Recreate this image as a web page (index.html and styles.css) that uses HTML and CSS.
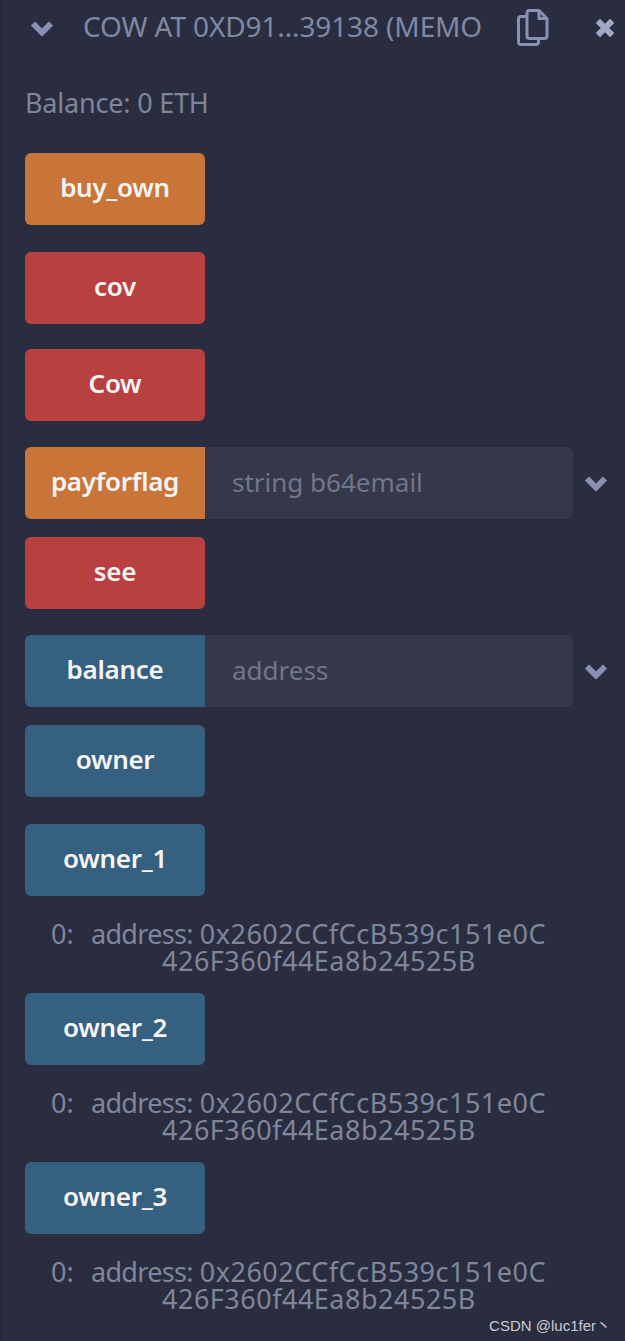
FILE: index.html
```html
<!DOCTYPE html>
<html lang="en">
<head>
<meta charset="utf-8">
<title>Cow contract</title>
<link rel="stylesheet" href="styles.css">
</head>
<body>
<main class="panel">
  <header class="head">
    <svg class="chev head-chev" viewBox="0 0 24 16"><path d="M3 3.500 12 12.500 21 3.500"/></svg>
    <div class="title">COW AT 0XD91...39138 (MEMO</div>
    <svg class="copy" viewBox="0 0 32 37"><path d="M10 7.500H4A2.500 2.500 0 0 0 1.500 10V33A2.500 2.500 0 0 0 4 35.500H19A2.500 2.500 0 0 0 21.500 33V29.500"/><path d="M12.500 1.500H22L30 9.500V27A2.500 2.500 0 0 1 27.500 29.500H12.500A2.500 2.500 0 0 1 10 27V4A2.500 2.500 0 0 1 12.500 1.500Z"/><path d="M22 2V9.500H29.500"/></svg>
    <svg class="close" viewBox="0 0 20 20"><path d="M3.500 3.500 16.500 16.500M16.500 3.500 3.500 16.500"/></svg>
  </header>
  <div class="balance">Balance: 0 ETH</div>

  <button class="btn orange">buy_own</button>
  <button class="btn red gap-a">cov</button>
  <button class="btn red gap-b">Cow</button>

  <div class="row gap-c">
    <button class="btn orange joined">payforflag</button>
    <div class="field">string b64email</div>
    <svg class="chev row-chev" viewBox="0 0 24 16"><path d="M3 3.500 12 12.500 21 3.500"/></svg>
  </div>
  <button class="btn red gap-d">see</button>
  <div class="row gap-c">
    <button class="btn blue joined">balance</button>
    <div class="field">address</div>
    <svg class="chev row-chev" viewBox="0 0 24 16"><path d="M3 3.500 12 12.500 21 3.500"/></svg>
  </div>
  <button class="btn blue gap-d">owner</button>
  <button class="btn blue gap-a">owner_1</button>
  <div class="result"><span class="idx">0:</span><span class="val"><span class="type">address:</span> <span class="hex">0x2602CCfCcB539c151e0C</span><span class="hex cont">426F360f44Ea8b24525B</span></span></div>
  <button class="btn blue gap-d">owner_2</button>
  <div class="result"><span class="idx">0:</span><span class="val"><span class="type">address:</span> <span class="hex">0x2602CCfCcB539c151e0C</span><span class="hex cont">426F360f44Ea8b24525B</span></span></div>
  <button class="btn blue gap-d">owner_3</button>
  <div class="result"><span class="idx">0:</span><span class="val"><span class="type">address:</span> <span class="hex">0x2602CCfCcB539c151e0C</span><span class="hex cont">426F360f44Ea8b24525B</span></span></div>
</main>
<div class="mark">CSDN @luc1fer丶</div>
</body>
</html>
```
FILE: styles.css
```css
html, body {
  margin: 0;
  height: 100%;
  overflow: hidden;
}
body {
  background: #2a2d40;
  font-family: "Noto Sans", sans-serif;
  position: relative;
  width: 625px;
  height: 1341px;
}
.panel {
  box-sizing: border-box;
  height: 1341px;
  padding-left: 23px;
  border-left: 2px solid #24273a;
}
.head {
  display: flex;
  align-items: center;
  height: 55px;
  position: relative;
}
.chev {
  fill: none;
  stroke: #8891b3;
  stroke-width: 6;
}
.head-chev {
  width: 24px;
  height: 16px;
  margin-left: 5px;
}
.title {
  margin-left: 29px;
  flex: none;
  font-size: 28px;
  line-height: 53px;
  height: 55px;
  letter-spacing: -0.12px;
  color: #7f88a5;
  white-space: nowrap;
}
.copy {
  position: absolute;
  left: 492px;
  top: 9px;
  width: 32px;
  height: 37px;
  fill: none;
  stroke: #8891b3;
  stroke-width: 3;
}
.close {
  position: absolute;
  left: 569px;
  top: 17px;
  width: 22px;
  height: 22px;
  fill: none;
  stroke: #a1a9c6;
  stroke-width: 5.5;
}
.balance {
  height: 98px;
  line-height: 96px;
  font-size: 27px;
  letter-spacing: -0.2px;
  color: #7f869c;
}
.btn {
  display: block;
  box-sizing: border-box;
  width: 180px;
  height: 72px;
  padding: 0 0 4px;
  border: 0;
  border-radius: 6px;
  color: #f4f4f4;
  font: 600 26px "Noto Sans", sans-serif;
  letter-spacing: -0.3px;
  text-align: center;
  flex: none;
}
.orange { background: #c97539; }
.red { background: #b84040; }
.blue { background: #35607f; }
.gap-a { margin-top: 27px; }
.gap-b { margin-top: 25px; }
.gap-c { margin-top: 26px; }
.gap-d { margin-top: 18px; }
.row {
  display: flex;
  align-items: center;
}
.joined {
  border-radius: 6px 0 0 6px;
}
.field {
  box-sizing: border-box;
  width: 368px;
  height: 72px;
  line-height: 70px;
  padding-left: 27px;
  background: #35384b;
  border-radius: 0 6px 6px 0;
  font-size: 26px;
  color: #71768a;
}
.row-chev {
  width: 24px;
  height: 16px;
  margin-left: 11px;
}
.result {
  display: flex;
  margin-top: 24px;
  padding-bottom: 1px;
  margin-left: 26px;
  font-size: 27px;
  line-height: 27px;
  color: #7f869c;
}
.idx {
  width: 40px;
  flex: none;
}
.val {
  white-space: nowrap;
}
.type {
  letter-spacing: -0.7px;
}
.hex {
  letter-spacing: 0.5px;
}
.cont {
  display: block;
  margin-left: 71px;
}
.mark {
  position: absolute;
  right: 14px;
  bottom: 6px;
  font: 15px "Liberation Sans", "Noto Sans CJK SC", sans-serif;
  color: #c8ccd4;
}
```
